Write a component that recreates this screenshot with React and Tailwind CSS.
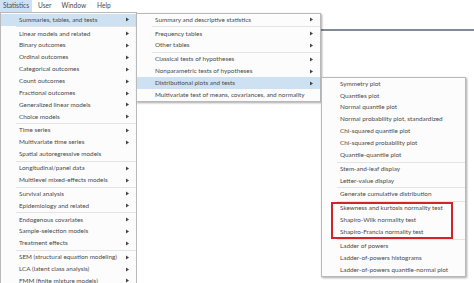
import React from "react";

const mainItems = [
  { label: "Summaries, tables, and tests", sub: true, active: true },
  "sep",
  { label: "Linear models and related", sub: true },
  { label: "Binary outcomes", sub: true },
  { label: "Ordinal outcomes", sub: true },
  { label: "Categorical outcomes", sub: true },
  { label: "Count outcomes", sub: true },
  { label: "Fractional outcomes", sub: true },
  { label: "Generalized linear models", sub: true },
  { label: "Choice models", sub: true },
  "sep",
  { label: "Time series", sub: true },
  { label: "Multivariate time series", sub: true },
  { label: "Spatial autoregressive models" },
  "sep",
  { label: "Longitudinal/panel data", sub: true },
  { label: "Multilevel mixed-effects models", sub: true },
  "sep",
  { label: "Survival analysis", sub: true },
  { label: "Epidemiology and related", sub: true },
  "sep",
  { label: "Endogenous covariates", sub: true },
  { label: "Sample-selection models", sub: true },
  { label: "Treatment effects", sub: true },
  "sep",
  { label: "SEM (structural equation modeling)", sub: true },
  { label: "LCA (latent class analysis)", sub: true },
  { label: "FMM (finite mixture models)", sub: true },
];

const summaryItems = [
  { label: "Summary and descriptive statistics", sub: true },
  "sep",
  { label: "Frequency tables", sub: true },
  { label: "Other tables", sub: true },
  "sep",
  { label: "Classical tests of hypotheses", sub: true },
  { label: "Nonparametric tests of hypotheses", sub: true },
  { label: "Distributional plots and tests", sub: true, active: true },
  { label: "Multivariate test of means, covariances, and normality" },
];

const Arrow = () => (
  <svg width="3" height="5" viewBox="0 0 3 5" className="shrink-0 mr-[1px]">
    <path d="M0 0.5 L3 2.5 L0 4.5 Z" fill="#444" />
  </svg>
);

const Item = ({ label, sub, active }) => (
  <div
    className={`flex items-center h-[11.86px] pl-[18px] pr-[6px] ${
      active ? "bg-[#cde1f3]" : ""
    }`}
  >
    <span className="flex-1 whitespace-nowrap leading-none">{label}</span>
    {sub && <Arrow />}
  </div>
);

const Sep = () => (
  <div className="h-[2px] flex items-center pl-[15px]">
    <div className="h-px w-full bg-[#e4e4e4]" />
  </div>
);

const MenuList = ({ items }) =>
  items.map((it, i) => (it === "sep" ? <Sep key={i} /> : <Item key={i} {...it} />));

export default function App() {
  return (
    <div className="relative w-[474px] h-[283px] overflow-hidden bg-white text-[#4a4a4a] text-[6.35px] [font-family:Lato,sans-serif]">
      {/* menu bar + window behind */}
      <div className="flex h-[12px] items-center text-[6.6px]">
        <div className="h-full w-[32px] flex items-center justify-center bg-[#cde1f3]">Statistics</div>
        <div className="ml-[6px]">User</div>
        <div className="ml-[10px]">Window</div>
        <div className="ml-[11px]">Help</div>
      </div>
      <div className="mt-[17px] h-[2px] bg-[#7f8b96]" />

      {/* cascading menus */}
      <div className="absolute left-0 top-[12px] flex items-start">
        <div className="w-[137px] h-[280px] bg-[#fcfcfc] border border-[#b9b9b9] pt-[1px]">
          <MenuList items={mainItems} />
        </div>

        <div className="w-[185px] -ml-px mt-[1px] bg-[#fcfcfc] border border-[#b9b9b9] shadow-[1px_1px_2px_rgba(0,0,0,0.35)]">
          <MenuList items={summaryItems} />
        </div>

        <div className="w-[145px] mt-[65px] bg-[#fcfcfc] border border-[#b9b9b9] shadow-[1px_1px_2px_rgba(0,0,0,0.35)]">
          <Item label="Symmetry plot" />
          <Item label="Quantiles plot" />
          <Item label="Normal quantile plot" />
          <Item label="Normal probability plot, standardized" />
          <Item label="Chi-squared quantile plot" />
          <Item label="Chi-squared probability plot" />
          <Item label="Quantile-quantile plot" />
          <Sep />
          <Item label="Stem-and-leaf display" />
          <Item label="Letter-value display" />
          <Sep />
          <Item label="Generate cumulative distribution" />
          <Sep />
          <div className="relative">
            <Item label="Skewness and kurtosis normality test" />
            <Item label="Shapiro-Wilk normality test" />
            <Item label="Shapiro-Francia normality test" />
            <div className="absolute left-[9px] right-[12px] -top-[1px] -bottom-[1px] border-2 border-[#d3242c]" />
          </div>
          <Sep />
          <Item label="Ladder of powers" />
          <Item label="Ladder-of-powers histograms" />
          <Item label="Ladder-of-powers quantile-normal plot" />
        </div>
      </div>
    </div>
  );
}
